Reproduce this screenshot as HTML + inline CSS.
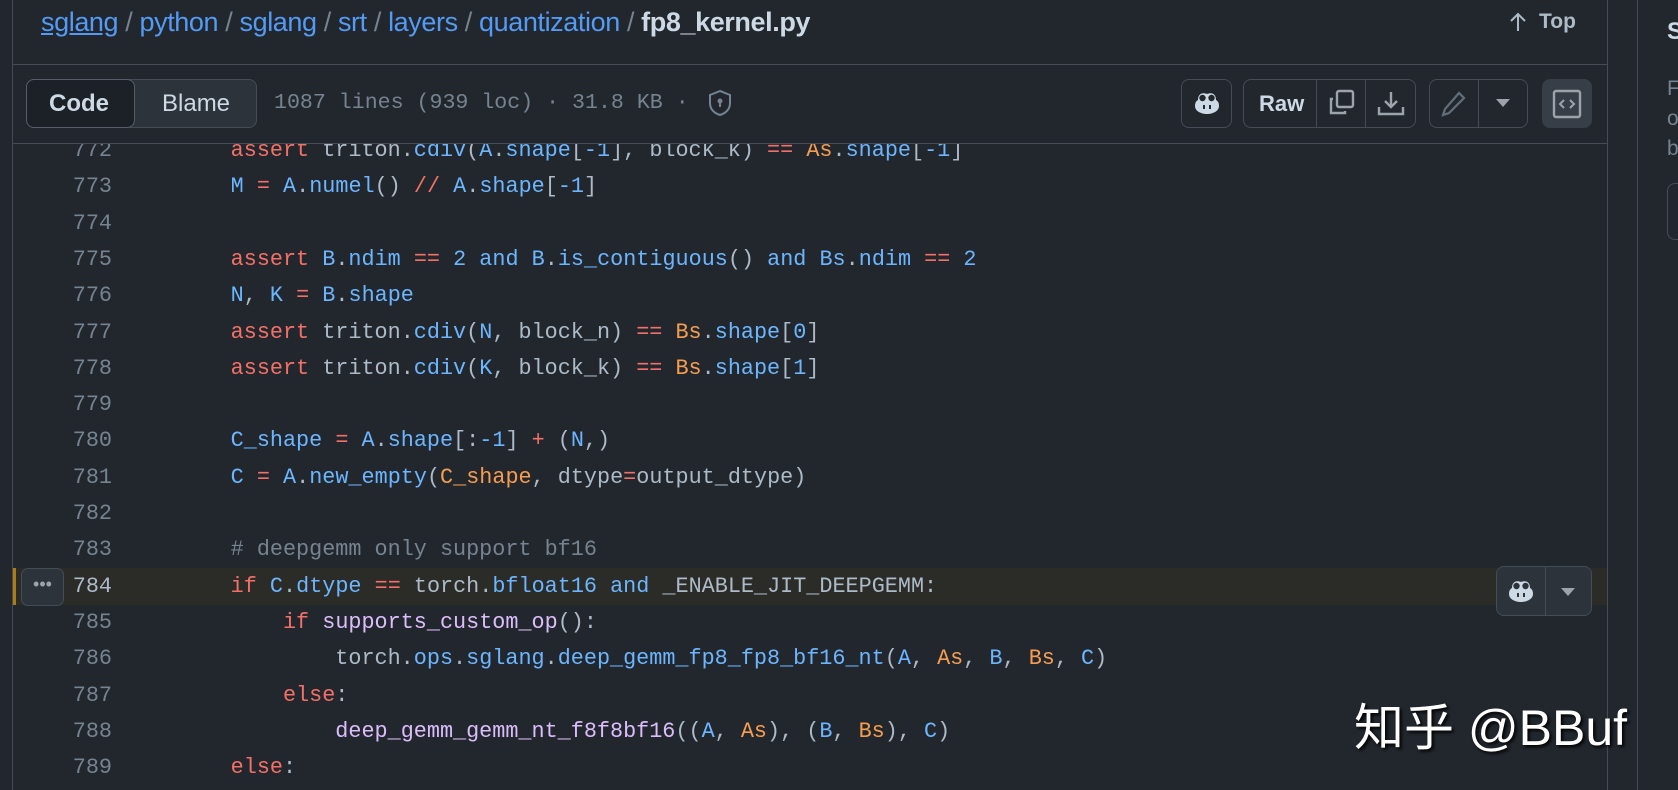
<!DOCTYPE html>
<html><head><meta charset="utf-8"><style>
*{box-sizing:border-box;margin:0;padding:0}
body{width:1678px;height:790px;background:#22272e;overflow:hidden;position:relative;font-family:"Liberation Sans",sans-serif;color:#adbac7}
.abs{position:absolute}
.crumb{left:41px;top:7px;font-size:27px;color:#539bf5;white-space:nowrap;letter-spacing:-0.4px}
.crumb .sep{color:#768390}
.crumb b{font-weight:bold;color:#cdd9e5}
.hline{background:#444c56;height:1px}
.btn{position:absolute;border:1px solid #444c56;border-radius:8px;background:#22272e}
.mono{font-family:"Liberation Mono",monospace}
.code{position:absolute;left:0;top:144px;width:1607px;height:646px;overflow:hidden}
.row{position:absolute;left:0;height:36.3px;width:1607px;line-height:36.3px;font-family:"Liberation Mono",monospace;font-size:21.8px;white-space:pre}
.ln{position:absolute;right:1495px;color:#768390;text-align:right}
.tx{position:absolute;left:126px;color:#adbac7}
.k{color:#f47067}.b{color:#6cb6ff}.o{color:#f69d50}.p{color:#dcbdfb}.c{color:#768390}
svg{position:absolute}
</style></head><body>
<div class="abs crumb"><span style="text-decoration:underline">sglang</span> <span class="sep">/</span> python <span class="sep">/</span> sglang <span class="sep">/</span> srt <span class="sep">/</span> layers <span class="sep">/</span> quantization <span class="sep">/</span> <b>fp8_kernel.py</b></div>
<svg style="left:1507px;top:11px" width="22" height="22" viewBox="0 0 22 22"><path d="M11 20V3M4 10l7-7 7 7" stroke="#adbac7" stroke-width="2" fill="none"/></svg>
<div class="abs" style="left:1539px;top:10px;font-size:21px;color:#adbac7;font-weight:bold">Top</div>
<div class="abs hline" style="left:12px;top:64px;width:1596px"></div>
<div class="abs" style="left:12px;top:0;width:1px;height:790px;background:#444c56"></div>
<div class="abs" style="left:1607px;top:0;width:1px;height:790px;background:#444c56"></div>
<div class="abs" style="left:1637px;top:0;width:1px;height:790px;background:#444c56"></div>
<div class="abs" style="left:1667px;top:18px;font-size:24px;font-weight:bold;color:#cdd9e5">S</div>
<div class="abs" style="left:1667px;top:74px;font-size:21px;color:#768390;line-height:30px">F<br>o<br>b</div>
<div class="abs" style="left:1667px;top:183px;width:20px;height:57px;border:1px solid #444c56;border-right:none;border-radius:8px 0 0 8px"></div>

<div class="btn" style="left:26px;top:79px;width:231px;height:49px;background:#2d333b"></div>
<div class="btn" style="left:26px;top:79px;width:109px;height:49px;background:#1c2128;border-color:#545d68"></div>
<div class="abs" style="left:49px;top:90px;font-size:24px;font-weight:bold;color:#cdd9e5">Code</div>
<div class="abs" style="left:162px;top:90px;font-size:24px;color:#cdd9e5">Blame</div>
<div class="abs mono" style="left:274px;top:91px;font-size:21.6px;color:#768390">1087 lines (939 loc) · 31.8 KB ·</div>
<svg style="left:707px;top:89px" width="26" height="28" viewBox="0 0 26 28"><path d="M13 2L3 6v8c0 6 4 10 10 12 6-2 10-6 10-12V6z" stroke="#768390" stroke-width="2" fill="none"/><circle cx="13" cy="12" r="2.5" fill="#768390"/><path d="M13 13v5" stroke="#768390" stroke-width="2"/></svg>

<div class="btn" style="left:1181px;top:79px;width:51px;height:49px"></div>
<svg style="left:1193px;top:90px" width="28" height="26" viewBox="0 0 28 26"><path d="M5 10c0-6 4-8 9-6 5-2 9 0 9 6 2 1 3 3 3 6 0 5-6 8-12 8S2 21 2 16c0-3 1-5 3-6z" fill="#cdd9e5"/><circle cx="9.5" cy="8" r="3.2" fill="#22272e"/><circle cx="18.5" cy="8" r="3.2" fill="#22272e"/><rect x="10" y="15" width="2" height="4" fill="#22272e"/><rect x="16" y="15" width="2" height="4" fill="#22272e"/></svg>
<div class="btn" style="left:1243px;top:79px;width:173px;height:49px"></div>
<div class="abs" style="left:1316px;top:79px;width:1px;height:49px;background:#444c56"></div>
<div class="abs" style="left:1365px;top:79px;width:1px;height:49px;background:#444c56"></div>
<div class="abs" style="left:1259px;top:91px;font-size:22px;font-weight:bold;color:#cdd9e5">Raw</div>
<svg style="left:1327px;top:89px" width="30" height="30" viewBox="0 0 30 30"><rect x="10" y="2" width="16" height="16" rx="2" stroke="#9ca3ab" stroke-width="2.4" fill="none"/><path d="M6 10H4v14h14v-2" stroke="#9ca3ab" stroke-width="2.4" fill="none"/></svg>
<svg style="left:1376px;top:89px" width="30" height="30" viewBox="0 0 30 30"><path d="M15 3v15M9 12l6 6 6-6M3 18v7h24v-7" stroke="#9ca3ab" stroke-width="2.4" fill="none"/></svg>
<div class="btn" style="left:1429px;top:79px;width:99px;height:49px"></div>
<div class="abs" style="left:1478px;top:79px;width:1px;height:49px;background:#444c56"></div>
<svg style="left:1441px;top:90px" width="26" height="28" viewBox="0 0 26 28"><path d="M18 3l5 5L8 23l-6 2 2-6z" stroke="#636e7b" stroke-width="2.2" fill="none"/></svg>
<svg style="left:1496px;top:99px" width="14" height="9" viewBox="0 0 14 9"><path d="M0 0h14L7 8z" fill="#9ca3ab"/></svg>
<div class="btn" style="left:1542px;top:79px;width:50px;height:49px;background:#373e47;border-color:#373e47"></div>
<svg style="left:1552px;top:89px" width="30" height="30" viewBox="0 0 30 30"><rect x="2" y="2" width="26" height="26" rx="2" stroke="#9ca3ab" stroke-width="2.4" fill="none"/><path d="M12 11l-4 4 4 4M18 11l4 4-4 4" stroke="#9ca3ab" stroke-width="2" fill="none"/></svg>
<div class="abs hline" style="left:12px;top:143px;width:1596px"></div>

<div class="code">
<div style="position:absolute;left:13px;top:424px;width:1594px;height:37px;background:#2b2b28"></div>
<div style="position:absolute;left:13px;top:424px;width:3px;height:37px;background:#ae7c14"></div>
<div style="position:absolute;left:21px;top:424px;width:43px;height:38px;border:1px solid #444c56;border-radius:7px;background:#2d333b;color:#9ca3ab;font-size:18px;text-align:center;line-height:30px">•••</div>
</div>
<div class="btn" style="left:1496px;top:566px;width:96px;height:50px;background:#2d333b"></div>
<div class="abs" style="left:1545px;top:566px;width:1px;height:50px;background:#444c56"></div>
<svg style="left:1507px;top:578px" width="28" height="26" viewBox="0 0 28 26"><path d="M5 10c0-6 4-8 9-6 5-2 9 0 9 6 2 1 3 3 3 6 0 5-6 8-12 8S2 21 2 16c0-3 1-5 3-6z" fill="#cdd9e5"/><circle cx="9.5" cy="8" r="3.2" fill="#2d333b"/><circle cx="18.5" cy="8" r="3.2" fill="#2d333b"/><rect x="10" y="15" width="2" height="4" fill="#2d333b"/><rect x="16" y="15" width="2" height="4" fill="#2d333b"/></svg>
<svg style="left:1561px;top:588px" width="14" height="9" viewBox="0 0 14 9"><path d="M0 0h14L7 8z" fill="#9ca3ab"/></svg>

<div class="code" style="background:transparent;pointer-events:none">
<div class="row" style="top:-11px"><span class="ln">772</span><span class="tx">        <span class="k">assert</span> triton.<span class="b">cdiv</span>(<span class="b">A</span>.<span class="b">shape</span>[<span class="b">-1</span>], block_k) <span class="k">==</span> <span class="o">As</span>.<span class="b">shape</span>[<span class="b">-1</span>]</span></div>
<div class="row" style="top:25.3px"><span class="ln">773</span><span class="tx">        <span class="b">M</span> <span class="k">=</span> <span class="b">A</span>.<span class="b">numel</span>() <span class="k">//</span> <span class="b">A</span>.<span class="b">shape</span>[<span class="b">-1</span>]</span></div>
<div class="row" style="top:61.6px"><span class="ln">774</span></div>
<div class="row" style="top:97.9px"><span class="ln">775</span><span class="tx">        <span class="k">assert</span> <span class="b">B</span>.<span class="b">ndim</span> <span class="k">==</span> <span class="b">2</span> <span class="b">and</span> <span class="b">B</span>.<span class="b">is_contiguous</span>() <span class="b">and</span> <span class="b">Bs</span>.<span class="b">ndim</span> <span class="k">==</span> <span class="b">2</span></span></div>
<div class="row" style="top:134.2px"><span class="ln">776</span><span class="tx">        <span class="b">N</span>, <span class="b">K</span> <span class="k">=</span> <span class="b">B</span>.<span class="b">shape</span></span></div>
<div class="row" style="top:170.5px"><span class="ln">777</span><span class="tx">        <span class="k">assert</span> triton.<span class="b">cdiv</span>(<span class="b">N</span>, block_n) <span class="k">==</span> <span class="o">Bs</span>.<span class="b">shape</span>[<span class="b">0</span>]</span></div>
<div class="row" style="top:206.8px"><span class="ln">778</span><span class="tx">        <span class="k">assert</span> triton.<span class="b">cdiv</span>(<span class="b">K</span>, block_k) <span class="k">==</span> <span class="o">Bs</span>.<span class="b">shape</span>[<span class="b">1</span>]</span></div>
<div class="row" style="top:243.1px"><span class="ln">779</span></div>
<div class="row" style="top:279.4px"><span class="ln">780</span><span class="tx">        <span class="b">C_shape</span> <span class="k">=</span> <span class="b">A</span>.<span class="b">shape</span>[:<span class="b">-1</span>] <span class="k">+</span> (<span class="b">N</span>,)</span></div>
<div class="row" style="top:315.7px"><span class="ln">781</span><span class="tx">        <span class="b">C</span> <span class="k">=</span> <span class="b">A</span>.<span class="b">new_empty</span>(<span class="o">C_shape</span>, dtype<span class="k">=</span>output_dtype)</span></div>
<div class="row" style="top:352px"><span class="ln">782</span></div>
<div class="row" style="top:388.3px"><span class="ln">783</span><span class="tx">        <span class="c"># deepgemm only support bf16</span></span></div>
<div class="row" style="top:424.6px"><span class="ln" style="color:#adbac7">784</span><span class="tx">        <span class="k">if</span> <span class="b">C</span>.<span class="b">dtype</span> <span class="k">==</span> torch.<span class="b">bfloat16</span> <span class="b">and</span> _ENABLE_JIT_DEEPGEMM:</span></div>
<div class="row" style="top:460.9px"><span class="ln">785</span><span class="tx">            <span class="k">if</span> <span class="p">supports_custom_op</span>():</span></div>
<div class="row" style="top:497.2px"><span class="ln">786</span><span class="tx">                torch.<span class="b">ops</span>.<span class="b">sglang</span>.<span class="b">deep_gemm_fp8_fp8_bf16_nt</span>(<span class="b">A</span>, <span class="o">As</span>, <span class="b">B</span>, <span class="o">Bs</span>, <span class="b">C</span>)</span></div>
<div class="row" style="top:533.5px"><span class="ln">787</span><span class="tx">            <span class="k">else</span>:</span></div>
<div class="row" style="top:569.8px"><span class="ln">788</span><span class="tx">                <span class="p">deep_gemm_gemm_nt_f8f8bf16</span>((<span class="b">A</span>, <span class="o">As</span>), (<span class="b">B</span>, <span class="o">Bs</span>), <span class="b">C</span>)</span></div>
<div class="row" style="top:606.1px"><span class="ln">789</span><span class="tx">        <span class="k">else</span>:</span></div>
</div>
<div class="abs" style="left:1354px;top:688px;font-size:50px;color:#fff;font-family:'Liberation Sans','Noto Sans CJK SC',sans-serif;text-shadow:2px 2px 3px #000;white-space:nowrap">知乎 @BBuf</div>
</body></html>
